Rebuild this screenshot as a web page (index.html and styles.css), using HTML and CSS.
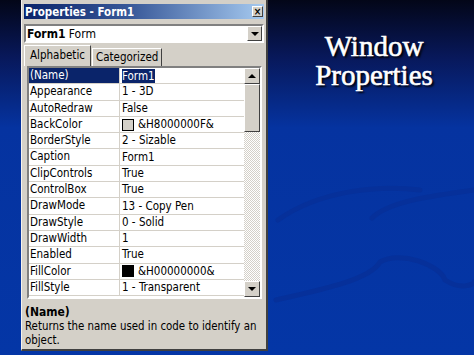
FILE: index.html
```html
<!DOCTYPE html>
<html lang="en">
<head>
    <meta charset="UTF-8">
    <title>Window Properties</title>
    <link rel="stylesheet" href="styles.css">
</head>
<body>
    <svg class="swoosh" width="474" height="355" viewBox="0 0 474 355">
        <path d="M278 220 C 320 190, 380 185, 420 190 M372 218 C 390 200, 440 195, 474 190" fill="none" stroke="#06309a" stroke-width="5" stroke-linecap="round"/>
        <path d="M276 300 C 320 290, 370 280, 380 262 C 400 250, 440 265, 445 280 C 460 290, 474 285, 474 282" fill="none" stroke="#06309a" stroke-width="5" stroke-linecap="round"/>
    </svg>
    <div class="slide">
        <div class="panel">
            <div class="titlebar">
                <span>Properties - Form1</span>
                <span class="close">&#215;</span>
            </div>
            <div class="combo">
                <span class="combo-text"><b>Form1</b> Form</span>
                <span class="btn"><span class="arrow-down"></span></span>
            </div>
            <div class="tabs">
                <div class="tab active">Alphabetic</div>
                <div class="tab">Categorized</div>
            </div>
            <div class="grid">
                <div class="rows">
                    <div class="row sel"><div class="name">(Name)</div><div class="val"><span class="hl">Form1</span></div></div>
                    <div class="row"><div class="name">Appearance</div><div class="val">1 - 3D</div></div>
                    <div class="row"><div class="name">AutoRedraw</div><div class="val">False</div></div>
                    <div class="row"><div class="name">BackColor</div><div class="val"><span class="swatch"></span>&amp;H8000000F&amp;</div></div>
                    <div class="row"><div class="name">BorderStyle</div><div class="val">2 - Sizable</div></div>
                    <div class="row"><div class="name">Caption</div><div class="val">Form1</div></div>
                    <div class="row"><div class="name">ClipControls</div><div class="val">True</div></div>
                    <div class="row"><div class="name">ControlBox</div><div class="val">True</div></div>
                    <div class="row"><div class="name">DrawMode</div><div class="val">13 - Copy Pen</div></div>
                    <div class="row"><div class="name">DrawStyle</div><div class="val">0 - Solid</div></div>
                    <div class="row"><div class="name">DrawWidth</div><div class="val">1</div></div>
                    <div class="row"><div class="name">Enabled</div><div class="val">True</div></div>
                    <div class="row"><div class="name">FillColor</div><div class="val"><span class="swatch black"></span>&amp;H00000000&amp;</div></div>
                    <div class="row"><div class="name">FillStyle</div><div class="val">1 - Transparent</div></div>
                </div>
                <div class="scrollbar">
                    <span class="btn"><span class="arrow-up"></span></span>
                    <span class="thumb"></span>
                    <span class="track"></span>
                    <span class="btn"><span class="arrow-down"></span></span>
                </div>
            </div>
            <div class="desc">
                <b>(Name)</b>
                <p>Returns the name used in code to identify an object.</p>
            </div>
        </div>
        <div class="heading">
            <h1>Window<br>Properties</h1>
        </div>
    </div>
</body>
</html>
```

FILE: styles.css
```css
* {
    margin: 0;
    padding: 0;
    box-sizing: border-box;
}

body {
    width: 474px;
    height: 355px;
    overflow: hidden;
    position: relative;
    background: linear-gradient(to bottom, #030618 0%, #08185a 16%, #0533a0 36%, #0436a6 100%);
    font-family: 'DejaVu Sans Condensed', 'DejaVu Sans', sans-serif;
    font-size: 11px;
    color: #000;
}

.swoosh {
    position: absolute;
    top: 0;
    left: 0;
}

.slide {
    position: relative;
    display: flex;
    height: 355px;
}

.panel {
    margin-left: 21px;
    width: 247px;
    height: 351px;
    background: #d4d0c8;
    border-left: 1px solid #f4f2ee;
    border-right: 2px solid #404040;
    border-bottom: 2px solid #404040;
    padding: 4px 2px 0 2px;
    display: flex;
    flex-direction: column;
}

.titlebar {
    height: 15px;
    background: linear-gradient(to right, #0a246a, #3a5a9a 45%, #a6caf0);
    color: #fff;
    font-weight: bold;
    font-size: 11.5px;
    padding-left: 1px;
    display: flex;
    align-items: center;
    justify-content: space-between;
}

.close {
    width: 11px;
    height: 11px;
    margin-right: 1px;
    background: #d4d0c8;
    color: #000;
    font-size: 10px;
    line-height: 9px;
    text-align: center;
    border: 1px solid;
    border-color: #fff #404040 #404040 #fff;
}

.combo {
    margin-top: 5px;
    height: 19px;
    background: #fff;
    border: 2px solid;
    border-color: #808080 #fff #fff #808080;
    display: flex;
    align-items: center;
    justify-content: space-between;
    font-size: 12px;
}

.combo-text {
    padding-left: 1px;
}

.btn {
    width: 15px;
    height: 15px;
    background: #d4d0c8;
    border: 1px solid;
    border-color: #fff #404040 #404040 #fff;
    display: flex;
    align-items: center;
    justify-content: center;
}

.arrow-down {
    width: 0;
    height: 0;
    border-left: 4px solid transparent;
    border-right: 4px solid transparent;
    border-top: 4px solid #000;
}

.arrow-up {
    width: 0;
    height: 0;
    border-left: 4px solid transparent;
    border-right: 4px solid transparent;
    border-bottom: 4px solid #000;
}

.tabs {
    margin-top: 2px;
    height: 21px;
    display: flex;
    align-items: flex-end;
}

.tab {
    height: 18px;
    padding: 0 3px;
    font-size: 11.5px;
    line-height: 16px;
    border: 1px solid;
    border-color: #fff #404040 transparent #fff;
    border-bottom: none;
    white-space: nowrap;
}

.tab.active {
    height: 21px;
    padding: 0 5px 0 5px;
    margin-right: 1px;
    line-height: 19px;
}

.grid {
    margin-left: 3px;
    width: 235px;
    height: 233px;
    border: 2px solid;
    border-color: #808080 #fff #fff #808080;
    background: #fff;
    display: flex;
    overflow: hidden;
}

.rows {
    flex: 1;
}

.row {
    height: 16.3px;
    display: flex;
    border-bottom: 1px solid #d4d0c8;
    line-height: 15px;
    font-size: 11.5px;
    white-space: nowrap;
}

.name {
    width: 91px;
    padding-left: 1px;
    border-right: 1px solid #d4d0c8;
}

.val {
    flex: 1;
    padding-left: 2px;
    display: flex;
    align-items: center;
}

.row.sel .name {
    background: #0a246a;
    color: #fff;
}

.hl {
    background: #0a246a;
    color: #fff;
    line-height: 14px;
}

.swatch {
    width: 12px;
    height: 12px;
    background: #d4d0c8;
    border: 1px solid #000;
    margin-right: 4px;
}

.swatch.black {
    background: #000;
}

.scrollbar {
    width: 16px;
    display: flex;
    flex-direction: column;
}

.scrollbar .btn {
    width: 16px;
    height: 16px;
}

.thumb {
    height: 48px;
    background: #d4d0c8;
    border: 1px solid;
    border-color: #fff #404040 #404040 #fff;
}

.track {
    flex: 1;
    background: repeating-conic-gradient(#fff 0 25%, #d4d0c8 0 50%) 0 0 / 2px 2px;
}

.desc {
    margin-top: 6px;
    padding-left: 1px;
    font-size: 11.4px;
    line-height: 14px;
}

.desc b {
    display: block;
    font-size: 12px;
}

.heading {
    flex: 1;
    padding-top: 32px;
    padding-left: 6px;
    text-align: center;
}

.heading h1 {
    font-family: 'Liberation Serif', serif;
    font-weight: normal;
    font-size: 29px;
    line-height: 29px;
    color: #fff;
    -webkit-text-stroke: 0.6px #fff;
    text-shadow: 2px 2px 2px #000;
}
```
